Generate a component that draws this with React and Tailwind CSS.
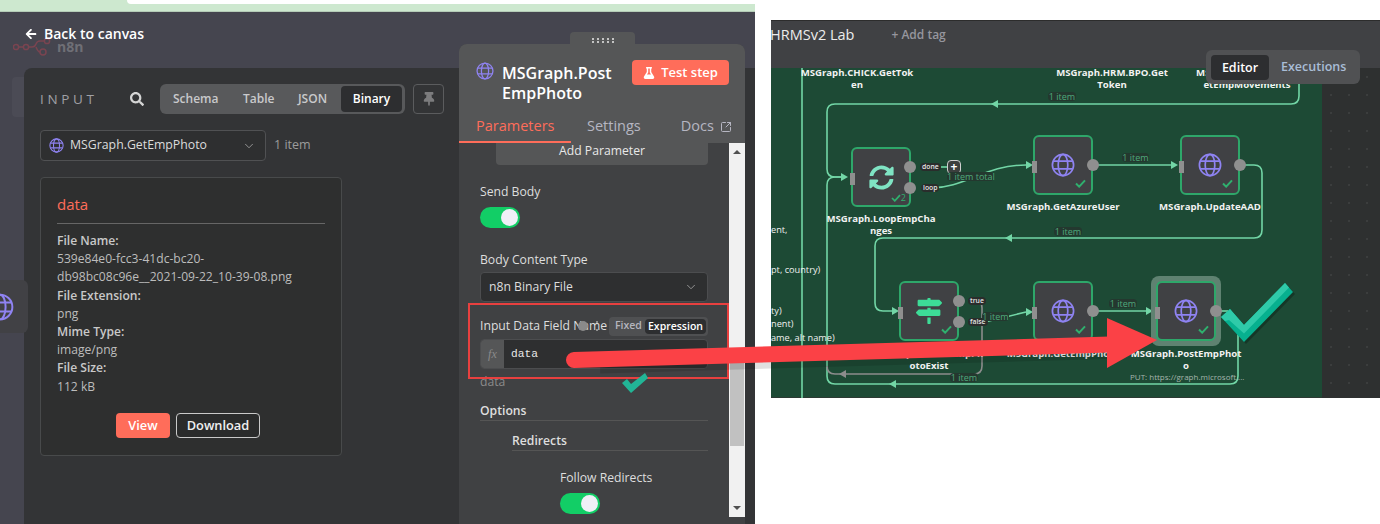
import React from "react";
import { FaArrowLeft, FaSearch, FaThumbtack, FaFlask, FaSyncAlt, FaMapSigns } from "react-icons/fa";
import { ChevronDown, SquareArrowOutUpRight } from "lucide-react";

const Globe = ({ className }) => (
  <svg viewBox="0 0 24 24" fill="none" stroke="#8f83f2" strokeWidth="1.7" className={className}>
    <circle cx="12" cy="12" r="10.6" />
    <ellipse cx="12" cy="12" rx="4.8" ry="10.6" />
    <path d="M2.4 8.2h19.2M2.4 15.8h19.2" />
  </svg>
);

const Toggle = () => (
  <div className="w-10 h-[21px] rounded-full bg-[#12ce66] flex items-center justify-end pr-[2px]">
    <div className="w-[17px] h-[17px] rounded-full bg-[#eff0f7]" />
  </div>
);

const Row = ({ b, children }) => (
  <div className={b ? "font-semibold text-[#c9c9c9]" : "text-[#bdbdbd]"}>{children}</div>
);

function InputPanel() {
  return (
    <div className="mt-14 w-[435px] h-[456px] bg-[#333436] rounded-tl-lg pl-4 pt-4 text-[12.1px] shrink-0">
      <div className="flex items-center h-[30px]">
        <div className="w-[90px] tracking-[0.27em] text-[13.5px] text-[#a0a0a5]">INPUT</div>
        <FaSearch className="w-[14px] h-[14px] text-[#d5d5d5]" />
        <div className="ml-4 w-[245px] h-[30px] rounded-md bg-[#58595b] flex items-center pl-[13px] pr-[2px] font-semibold text-[12px] text-[#c9c9cb]">
          <span className="w-[45px]">Schema</span>
          <span className="ml-[25px] w-8">Table</span>
          <span className="ml-[23px] w-[29px]">JSON</span>
          <span className="ml-[14px] w-[61px] h-[26px] rounded bg-[#2d2e30] text-white flex items-center justify-center">Binary</span>
        </div>
        <div className="ml-2 w-[31px] h-[30px] rounded border border-[#5b5c5e] flex items-center justify-center">
          <FaThumbtack className="w-3 h-[14px] text-[#7c7c7e]" />
        </div>
      </div>
      <div className="flex items-center mt-4">
        <div className="w-[226px] h-[31px] rounded border border-[#505153] bg-[#2e2f30] flex items-center pl-2 pr-[9px] text-[12.3px] text-[#dcdcdc]">
          <Globe className="w-[15px] h-[15px] mr-[6px]" />
          <span className="flex-1">MSGraph.GetEmpPhoto</span>
          <ChevronDown className="w-[14px] h-[14px] text-[#a0a0a0]" strokeWidth={1.5} />
        </div>
        <span className="ml-2 text-[12.5px] text-[#9c9c9c]">1 item</span>
      </div>
      <div className="mt-4 w-[302px] h-[279px] rounded border border-[#484a4b] bg-[#2e2f2f] px-4 pt-[16px]">
        <div className="text-[#ff6d5a] text-[15px] font-medium leading-5 pb-[9px] border-b border-[#666] mb-[8px]">data</div>
        <div className="leading-[18.2px]">
          <Row b>File Name:</Row>
          <Row>539e84e0-fcc3-41dc-bc20-</Row>
          <Row>db98bc08c96e__2021-09-22_10-39-08.png</Row>
          <Row b>File Extension:</Row>
          <Row>png</Row>
          <Row b>Mime Type:</Row>
          <Row>image/png</Row>
          <Row b>File Size:</Row>
          <Row>112 kB</Row>
        </div>
        <div className="flex gap-[6px] mt-[17px] ml-[59px] text-[12.8px] font-semibold">
          <button className="w-[54px] h-[25px] rounded bg-[#ff6d5a] text-white">View</button>
          <button className="w-[84px] h-[25px] rounded border border-[#c9c9c9] bg-[#2a2b2b] text-[#f0f0f0]">Download</button>
        </div>
      </div>
    </div>
  );
}

function CenterPanel() {
  return (
    <div className="mt-[32px] w-[286px] h-[480px] rounded-t-lg bg-[#404143] flex flex-col shrink-0 relative">
      <div className="absolute -top-3 left-[111px] w-[65px] h-3 rounded-t bg-[#555657] flex justify-center items-center gap-[3px] pt-1">
        {[0, 1, 2, 3, 4].map((i) => (
          <span key={i} className="w-[2px] h-[5px] border-y-2 border-[#c4c4c4]" />
        ))}
      </div>
      <div className="bg-[#555657] rounded-t-lg h-[99px] shrink-0">
        <div className="flex pl-[17px] pt-[19px] h-[71px]">
          <Globe className="w-[18px] h-[18px] mr-2 -mt-[1px]" />
          <div className="w-[130px] text-[16px] leading-5 font-semibold text-white">MSGraph.Post<br />EmpPhoto</div>
          <button className="ml-auto mr-[16px] -mt-[3px] w-[97px] h-[25px] rounded bg-[#ff6d5a] text-white text-[13px] font-semibold flex items-center justify-center gap-[6px]">
            <FaFlask className="w-3 h-3" /> Test step
          </button>
        </div>
        <div className="flex text-[14.5px] h-[28px] font-medium text-[#b6b6c2]">
          <div className="w-[112px] h-[28px] pl-[17px] text-[#ff6d5a] border-b-2 border-[#ff6d5a]">Parameters</div>
          <div className="ml-4">Settings</div>
          <div className="ml-[40px] flex items-start">Docs<SquareArrowOutUpRight className="w-3 h-3 ml-[6px] mt-[6px]" /></div>
        </div>
      </div>
      <div className="flex flex-1 min-h-0">
        <div className="w-[270px] pl-[21px] pr-[21px] text-[12.2px] text-[#dedede]">
          <div className="ml-4 w-[212px] h-[22px] rounded-b bg-[#555657] text-center leading-[15px] text-[#e8e8e8]">Add Parameter</div>
          <div className="mt-[18px] leading-[18px]">Send Body</div>
          <div className="mt-[6px]"><Toggle /></div>
          <div className="mt-[23px] leading-[18px]">Body Content Type</div>
          <div className="mt-[3px] h-[30px] rounded border border-[#4c4d4f] bg-[#2e2f30] flex items-center pl-2 pr-[9px]">
            <span className="flex-1">n8n Binary File</span>
            <ChevronDown className="w-[14px] h-[14px] text-[#a0a0a0]" strokeWidth={1.5} />
          </div>
          <div className="mt-[14px] h-[20px] flex items-center relative">
            <span className="whitespace-nowrap">Input Data Field Name</span>
            <span className="absolute left-[98px] w-[10px] h-[10px] rounded-full bg-[#8a8a8a]" />
            <span className="absolute left-[116px] w-[2px] h-[10px] border-y-2 border-[#8f8f8f]" />
            <div className="ml-auto w-[99px] h-[19px] shrink-0 rounded bg-[#4f5052] flex items-center text-[10.5px] font-semibold pl-[6px] pr-[2px]">
              <span className="text-[#b5b5bd]">Fixed</span>
              <span className="ml-auto w-[61px] h-[15px] rounded bg-[#2d2e30] text-white text-center leading-[15px]">Expression</span>
            </div>
          </div>
          <div className="mt-[3px] h-[30px] rounded border border-[#4c4d4f] bg-[#2e2f30] flex items-center overflow-hidden">
            <div className="w-[23px] h-full bg-[#555657] text-[#8a8a8a] text-center font-['Liberation_Serif',serif] italic leading-[28px]">fx</div>
            <div className="ml-[7px] font-['Liberation_Mono',monospace] text-[11.2px] text-[#e8e8e8]">data</div>
          </div>
          <div className="mt-[5px] text-[#8b8b8b] leading-[16px]">data</div>
          <div className="mt-[13px] leading-[16px] font-semibold border-b border-[#555] pb-[1px]">Options</div>
          <div className="ml-8 mt-[12px] leading-[16px] font-semibold border-b border-[#555] pb-[1px]">Redirects</div>
          <div className="ml-20 mt-[19px] leading-[16px]">Follow Redirects</div>
          <div className="ml-20 mt-[7px]"><Toggle /></div>
        </div>
        <div className="w-[16px] h-[374px] bg-[#f1f1f1] flex flex-col items-center justify-between">
          <div className="flex-1 flex flex-col w-full items-center">
            <div className="w-0 h-0 mt-[7px] border-x-[4px] border-x-transparent border-b-[4px] border-b-[#505050]" />
            <div className="w-[14px] h-[96px] mt-[196px] bg-[#c1c1c1]" />
          </div>
          <div className="w-0 h-0 mb-[7px] border-x-[4px] border-x-transparent border-t-[4px] border-t-[#505050]" />
        </div>
      </div>
    </div>
  );
}

function Editor() {
  return (
    <div className="relative w-[609px] mt-5 h-[378px] overflow-hidden shrink-0">
      <div className="h-12 bg-[#404144] border-t border-[#2c2c2c] flex items-start pt-[4px]">
        <span className="-ml-[1px] text-[14.5px] leading-5 text-[#ececec]">HRMSv2 Lab</span>
        <span className="ml-[37px] text-[12px] leading-5 font-semibold text-[#96969e]">+ Add tag</span>
      </div>
      <div className="flex h-[330px] relative">
        <div className="w-[551px] bg-[#1d4a35] border-b border-[#2c3a33]" />
        <div className="flex-1 bg-[#2e3030] bg-[radial-gradient(#4a4c4c_0.6px,transparent_0.8px)] bg-[length:18px_18px]" />
      </div>
      <Canvas />
      <div className="absolute left-[435px] top-[30px] w-[154px] h-[34px] rounded-md bg-[#505153] flex items-center pl-[5px] text-[12.5px] font-semibold">
        <span className="w-[58px] h-[25px] rounded bg-[#2d2e30] text-white text-center leading-[25px]">Editor</span>
        <span className="ml-[12px] text-[#a9bdd6]">Executions</span>
      </div>
    </div>
  );
}

const nodeBase = "absolute w-[60px] h-[60px] rounded-md bg-[#404144] border-2 border-[#2ea76a] flex items-center justify-center";
const OX = 771, OY = 20;

const Node = ({ x, y, children, check }) => (
  <div className={nodeBase} style={{ left: x - OX, top: y - OY }}>
    {children}
    {check && (
      <svg viewBox="0 0 12 10" className="absolute right-[5px] bottom-[5px] w-[11px] h-[9px]" fill="none" stroke="#2fb06e" strokeWidth="2.2">
        <path d="M1 5l3.5 3.5L11 1.5" />
      </svg>
    )}
    <span className="absolute -left-[3px] top-[24px] w-[5px] h-[12px] bg-[#8f8f8f]" />
  </div>
);

const Label = ({ cx, y, children }) => (
  <div className="absolute w-[160px] -ml-[80px] text-center text-[9.6px] leading-[12px] font-bold text-[#f2f2f2]" style={{ left: cx - OX, top: y - OY }}>
    {children}
  </div>
);

const Pill = ({ x, y, w, children }) => (
  <div className="absolute h-[9px] rounded-sm bg-[#24382f] text-[9px] leading-[9px] text-center whitespace-nowrap text-[#4ea97b] font-medium" style={{ left: x - OX, top: y - OY, width: w }}>
    {children}
  </div>
);

const Mini = ({ x, y, children }) => (
  <div className="absolute h-[8px] px-[2px] rounded-sm bg-[#2a2d2c] text-[6.8px] leading-[8px] text-[#e6e6e6] font-semibold" style={{ left: x - OX, top: y - OY }}>
    {children}
  </div>
);

const Frag = ({ y, children }) => (
  <div className="absolute left-0 text-[9.2px] leading-[12px] text-[#f0f0f0] whitespace-nowrap" style={{ top: y - OY }}>{children}</div>
);

function Canvas() {
  const g = "#72d6a6";
  const tri = (x, y, d = 1, c = g) => (
    <polygon points={`${x + 7 * d},${y} ${x},${y - 4} ${x},${y + 4}`} fill={c} />
  );
  return (
    <>
      <svg className="absolute left-0 top-0 w-[609px] h-[378px]" viewBox="771 20 609 378" fill="none" stroke={g} strokeWidth="1.6">
        <path d="M802 68V398" />
        <path d="M1299 68V96q0 8-8 8H835q-8 0-8 8V169q0 8 8 8h10" />
        <path d="M845 177h-10q-8 0-8 8V376q0 8 8 8H1230q8 0 8-8V330" />
        <path d="M1216 311H1228" />
        <path d="M1240 165h14q8 0 8 8v57q0 8-8 8H883q-8 0-8 8v57q0 8 8 8h10" />
        <path d="M921 188H930C965 188 985 165 1026 165" />
        <path d="M921 167H947" />
        <path d="M1093 165H1175" />
        <path d="M970 322H985L1026 312" />
        <path d="M970 301H975" />
        <path d="M1093 311H1150" />
        <path d="M975 301q7 0 7 7V366q0 8-8 8H835q-8 0-8-8" stroke="#8c8c8c" />
        <polygon points="998,100 998,108 991,104" fill={g} stroke="none" />
        <polygon points="1012,234 1012,242 1005,238" fill={g} stroke="none" />
        <polygon points="896,380 896,388 889,384" fill={g} stroke="none" />
        <polygon points="846,370 846,378 839,374" fill="#8c8c8c" stroke="none" />
        <g stroke="none">
          {tri(841, 177)}{tri(1026, 165)}{tri(1171, 165)}{tri(892, 311)}{tri(1026, 312)}{tri(1146, 311)}
        </g>
      </svg>
      <Frag y={224}>ent,</Frag>
      <Frag y={264}>pt, country)</Frag>
      <Frag y={305}>ty)</Frag>
      <Frag y={318}>nent)</Frag>
      <Frag y={332}>ame, alt name)</Frag>
      <Label cx={857} y={67}>MSGraph.CHICK.GetTok<br />en</Label>
      <Label cx={1112} y={67}>MSGraph.HRM.BPO.Get<br />Token</Label>
      <Label cx={1247} y={67}>MSGraph.HRM.BPO.G<br />etEmpMovements</Label>
      <Label cx={881} y={213}>MSGraph.LoopEmpCha<br />nges</Label>
      <Label cx={1063} y={201}>MSGraph.GetAzureUser</Label>
      <Label cx={1210} y={201}>MSGraph.UpdateAAD</Label>
      <Label cx={929} y={348}>MSGraph.CheckEmpPh<br />otoExist</Label>
      <Label cx={1063} y={348}>MSGraph.GetEmpPhoto</Label>
      <Label cx={1186} y={348}>MSGraph.PostEmpPhot<br />o</Label>
      <div className="absolute text-[8px] leading-[10px] text-[#a5b5ac] whitespace-nowrap" style={{ left: 1130 - OX, top: 372 - OY }}>PUT: https://graph.microsoft....</div>

      <div className="absolute w-[70px] h-[70px] rounded-lg bg-[#5f8271]" style={{ left: 1151 - OX, top: 276 - OY }} />

      <Node x={851} y={147}>
        <FaSyncAlt className="w-[25px] h-[25px] text-[#7fe3c3]" />
        <span className="absolute right-[3px] bottom-[2px] flex items-center text-[9px] leading-[10px] text-[#2fb06e]">
          <svg viewBox="0 0 12 10" className="w-[10px] h-[8px]" fill="none" stroke="#2fb06e" strokeWidth="2.2"><path d="M1 5l3.5 3.5L11 1.5" /></svg>2
        </span>
      </Node>
      <Node x={1033} y={135} check><Globe className="w-6 h-6" /></Node>
      <Node x={1180} y={135} check><Globe className="w-6 h-6" /></Node>
      <Node x={899} y={281} check><FaMapSigns className="w-[26px] h-[26px] text-[#3ddc97]" /></Node>
      <Node x={1033} y={281} check><Globe className="w-6 h-6" /></Node>
      <Node x={1156} y={281} check><Globe className="w-6 h-6" /></Node>

      {[[910, 167], [910, 188], [959, 301], [959, 322], [1093, 165], [1240, 165], [1093, 311], [1216, 311]].map(([x, y]) => (
        <span key={x + "-" + y} className="absolute w-3 h-3 rounded-full bg-[#8f8f8f]" style={{ left: x - 6 - OX, top: y - 6 - OY }} />
      ))}

      <Mini x={920} y={163}>done</Mini>
      <Mini x={921} y={184}>loop</Mini>
      <Mini x={968} y={297}>true</Mini>
      <Mini x={968} y={318}>false</Mini>
      <div className="absolute w-[14px] h-[14px] rounded-sm border border-[#cfcfcf] bg-[#3c3f3e] text-white text-[12px] leading-[11px] text-center font-bold" style={{ left: 947 - OX, top: 160 - OY }}>+</div>

      <Pill x={1048} y={92} w={28}>1 item</Pill>
      <Pill x={947} y={172} w={47}>1 item total</Pill>
      <Pill x={1122} y={153} w={27}>1 item</Pill>
      <Pill x={1054} y={227} w={28}>1 item</Pill>
      <Pill x={982} y={312} w={27}>1 item</Pill>
      <Pill x={950} y={373} w={28}>1 item</Pill>
      <Pill x={1109} y={299} w={28}>1 item</Pill>
    </>
  );
}

export default function App() {
  return (
    <div className="relative w-[1380px] h-[524px] bg-white overflow-hidden flex font-['Open_Sans',sans-serif]">
      <div className="w-[755px] h-[524px] flex flex-col shrink-0">
        <div className="h-3 bg-[#cde8cf] border-b border-[#b5ccb8] shrink-0">
          <div className="ml-[127px] h-1 bg-white rounded-bl-lg" />
        </div>
        <div className="relative flex-1 flex bg-[#45454f] pl-6 min-h-0">
          <div className="absolute left-[13px] top-[26px] flex items-center">
            <svg width="38" height="18" viewBox="0 0 38 18" fill="none" stroke="#7a4450" strokeWidth="1.5">
              <circle cx="3" cy="9" r="2.6" /><circle cx="13" cy="9" r="2.6" /><circle cx="30" cy="14" r="3" /><circle cx="34" cy="3" r="2.6" />
              <path d="M6 9h4M16 9h3q3 0 4-3t4-3h4M23 9q2 5 4 5" />
            </svg>
            <span className="ml-[6px] text-[14px] font-bold leading-4 text-[#6f6f76]">n8n</span>
          </div>
          <div className="absolute left-[12px] top-[65px] w-3 h-10 bg-[#4b4b55] rounded-l" />
          <div className="absolute left-[25px] top-[12px] flex items-center text-white text-[14px] font-semibold leading-[20px]">
            <FaArrowLeft className="w-3 h-3 mr-[7px]" />Back to canvas
          </div>
          <InputPanel />
          <CenterPanel />
          <div className="mt-14 flex-1 bg-[#333436]" />
          <div className="absolute left-0 top-[268px] w-7 h-[53px] rounded-r-md bg-[#414145] overflow-hidden">
            <Globe className="absolute -left-[14px] top-[13px] w-7 h-7" />
          </div>
        </div>
      </div>
      <div className="ml-4"><Editor /></div>

      <svg className="absolute inset-0 pointer-events-none" width="1380" height="524" viewBox="0 0 1380 524" fill="none">
        <rect x="469" y="304" width="259" height="74" stroke="#e8403f" strokeWidth="2" />
        <path d="M622 383l5 -4 4 5 14 -11 3 5 -17 15z" fill="#22b596" />
        <path d="M600 362.5L1107 348" stroke="#000" strokeOpacity="0.12" strokeWidth="16" transform="translate(0 3)" />
        <path d="M574 360L1110 344.5" stroke="#fb4146" strokeWidth="16" strokeLinecap="round" />
        <polygon points="1107,318 1157,340 1107,368" fill="#fb4146" />
        <polygon points="1223,319 1232,311 1246,327 1287,285 1295,294 1246,344" fill="#000" fillOpacity="0.25" />
        <polygon points="1221,317 1230,309 1244,325 1285,283 1293,292 1244,342" fill="#07b08f" />
        <polygon points="1221,317 1230,309 1244,325 1285,283 1289,287.5 1244,333.5 1229,320 1225,321" fill="#2fcaa9" />
      </svg>
    </div>
  );
}
